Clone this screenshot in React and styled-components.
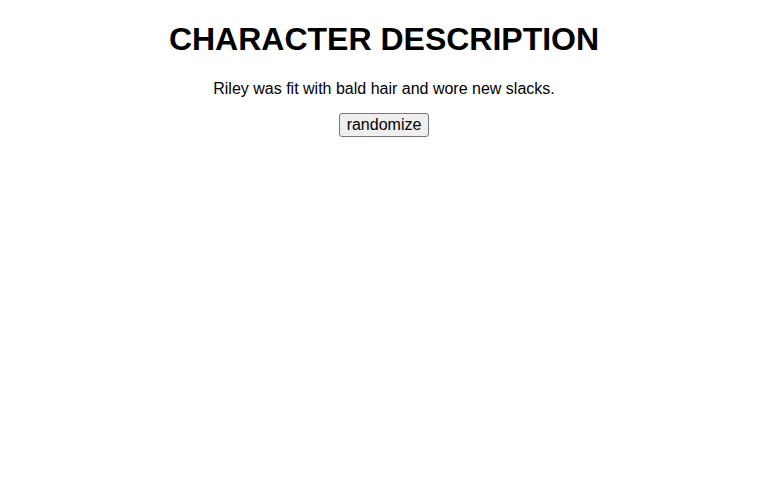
import React, { useState } from 'react';
import styled, { createGlobalStyle } from 'styled-components';

const GlobalStyle = createGlobalStyle`
  body {
    margin: 0 8px 8px;
    background: #ffffff;
    color: #000000;
    font-family: "Liberation Sans", Arial, sans-serif;
  }
`;

const Page = styled.div`
  text-align: center;
`;

const Title = styled.h1`
  font-size: 32px;
  font-weight: bold;
  margin: 21.44px 0;
`;

const Description = styled.p`
  font-size: 16px;
  margin: 16px 0 15px;
`;

const RandomButton = styled.button`
  font-family: "Liberation Sans", Arial, sans-serif;
  font-size: 16px;
  line-height: 18px;
  color: #000000;
  background: #efefef;
  border: 1px solid #767676;
  border-radius: 3px;
  padding: 2px 7px;
  cursor: pointer;

  &:hover {
    background: #e5e5e5;
  }
`;

const names = ['Riley', 'Jordan', 'Casey', 'Morgan'];
const builds = ['fit', 'tall', 'short', 'lanky'];
const hair = ['bald', 'curly', 'long', 'short'];
const clothes = ['slacks', 'boots', 'jeans', 'hat'];

const pick = list => list[Math.floor(Math.random() * list.length)];

export default function App() {
  const [character, setCharacter] = useState({
    name: 'Riley',
    build: 'fit',
    hair: 'bald',
    clothes: 'slacks',
  });

  const randomize = () =>
    setCharacter({
      name: pick(names),
      build: pick(builds),
      hair: pick(hair),
      clothes: pick(clothes),
    });

  return (
    <Page>
      <GlobalStyle />
      <Title>CHARACTER DESCRIPTION</Title>
      <Description>
        {character.name} was {character.build} with {character.hair} hair and wore new{' '}
        {character.clothes}.
      </Description>
      <RandomButton onClick={randomize}>randomize</RandomButton>
    </Page>
  );
}
